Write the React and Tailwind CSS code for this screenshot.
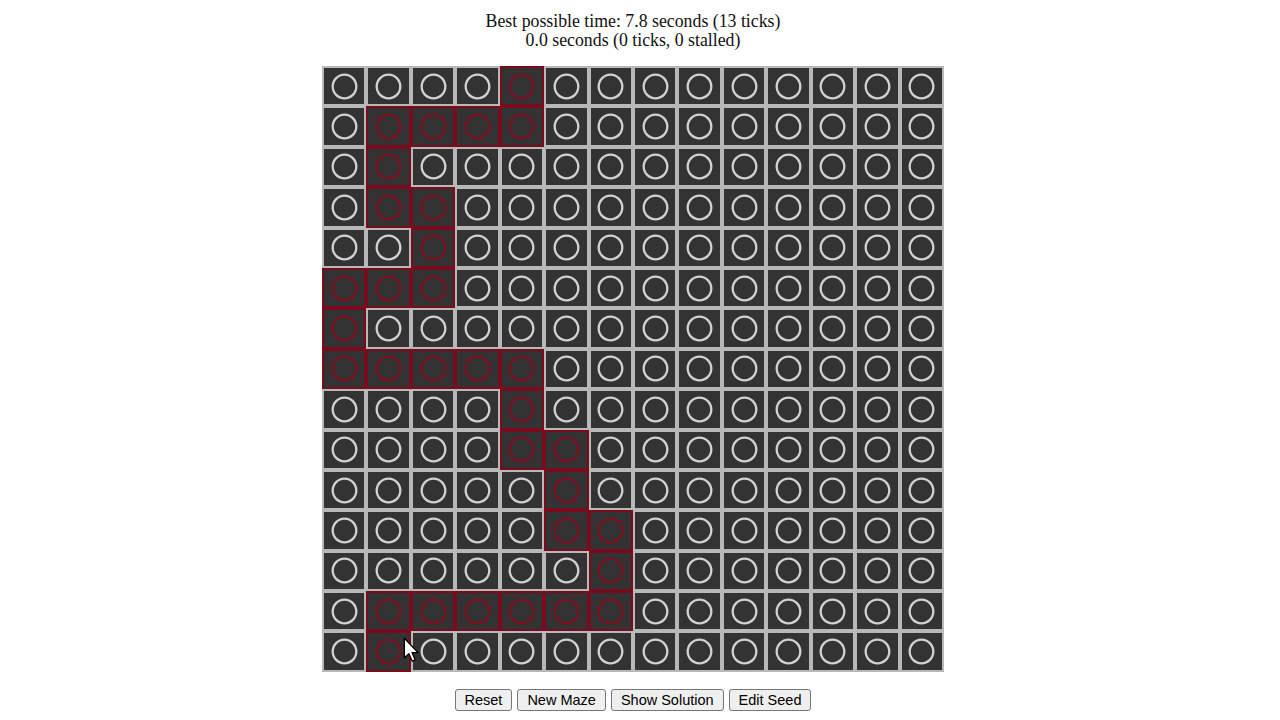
import React from "react";

const COLS = 14;
const ROWS = 15;

// solution path, one list of columns per row
const PATH = [
  [4],
  [1, 2, 3, 4],
  [1],
  [1, 2],
  [2],
  [0, 1, 2],
  [0],
  [0, 1, 2, 3, 4],
  [4],
  [4, 5],
  [5],
  [5, 6],
  [6],
  [1, 2, 3, 4, 5, 6],
  [1],
];

const Cell = ({ onPath }) => (
  <div
    className={
      "flex items-center justify-center bg-[#333333] border-2 " +
      (onPath ? "border-[#7a0a1e]" : "border-[#b8b8b8]")
    }
  >
    <svg width="27" height="27" viewBox="0 0 27 27">
      <circle
        cx="13.5"
        cy="13.5"
        r="11.8"
        fill="none"
        stroke={onPath ? "#7d0f22" : "#d2d2d2"}
        strokeWidth="2.3"
      />
    </svg>
  </div>
);

const Cursor = () => (
  <svg
    className="absolute left-[403px] top-[637px]"
    width="17"
    height="26"
    viewBox="0 0 13 20"
  >
    <path
      d="M1 1 L1 16 L4.5 12.8 L7 18.5 L9.3 17.5 L6.9 12 L11.5 12 Z"
      fill="#ffffff"
      stroke="#000000"
      strokeWidth="1"
      strokeLinejoin="round"
    />
  </svg>
);

const btn =
  "bg-[#efefef] border border-[#767676] rounded-[3px] px-[9px] h-[22px] text-[14.5px] leading-none text-black";

export default function App() {
  return (
    <div className="relative w-[1266px] min-h-[720px] bg-white flex flex-col items-center pt-[12px]">
      <div
        className="text-center text-[17.8px] leading-[19px] text-[#111]"
        style={{ fontFamily: '"Liberation Serif", "Times New Roman", serif' }}
      >
        <div>Best possible time: 7.8 seconds (13 ticks)</div>
        <div>0.0 seconds (0 ticks, 0 stalled)</div>
      </div>

      <div className="mt-[16px] grid grid-cols-[repeat(14,44.43px)] grid-rows-[repeat(15,40.4px)]">
        {Array.from({ length: ROWS }).map((_, r) =>
          Array.from({ length: COLS }).map((_, c) => (
            <Cell key={r + "-" + c} onPath={PATH[r].includes(c)} />
          ))
        )}
      </div>

      <div
        className="mt-[17px] flex gap-[5px]"
        style={{ fontFamily: '"Liberation Sans", Arial, sans-serif' }}
      >
        <button className={btn}>Reset</button>
        <button className={btn}>New Maze</button>
        <button className={btn}>Show Solution</button>
        <button className={btn}>Edit Seed</button>
      </div>

      <Cursor />
    </div>
  );
}
